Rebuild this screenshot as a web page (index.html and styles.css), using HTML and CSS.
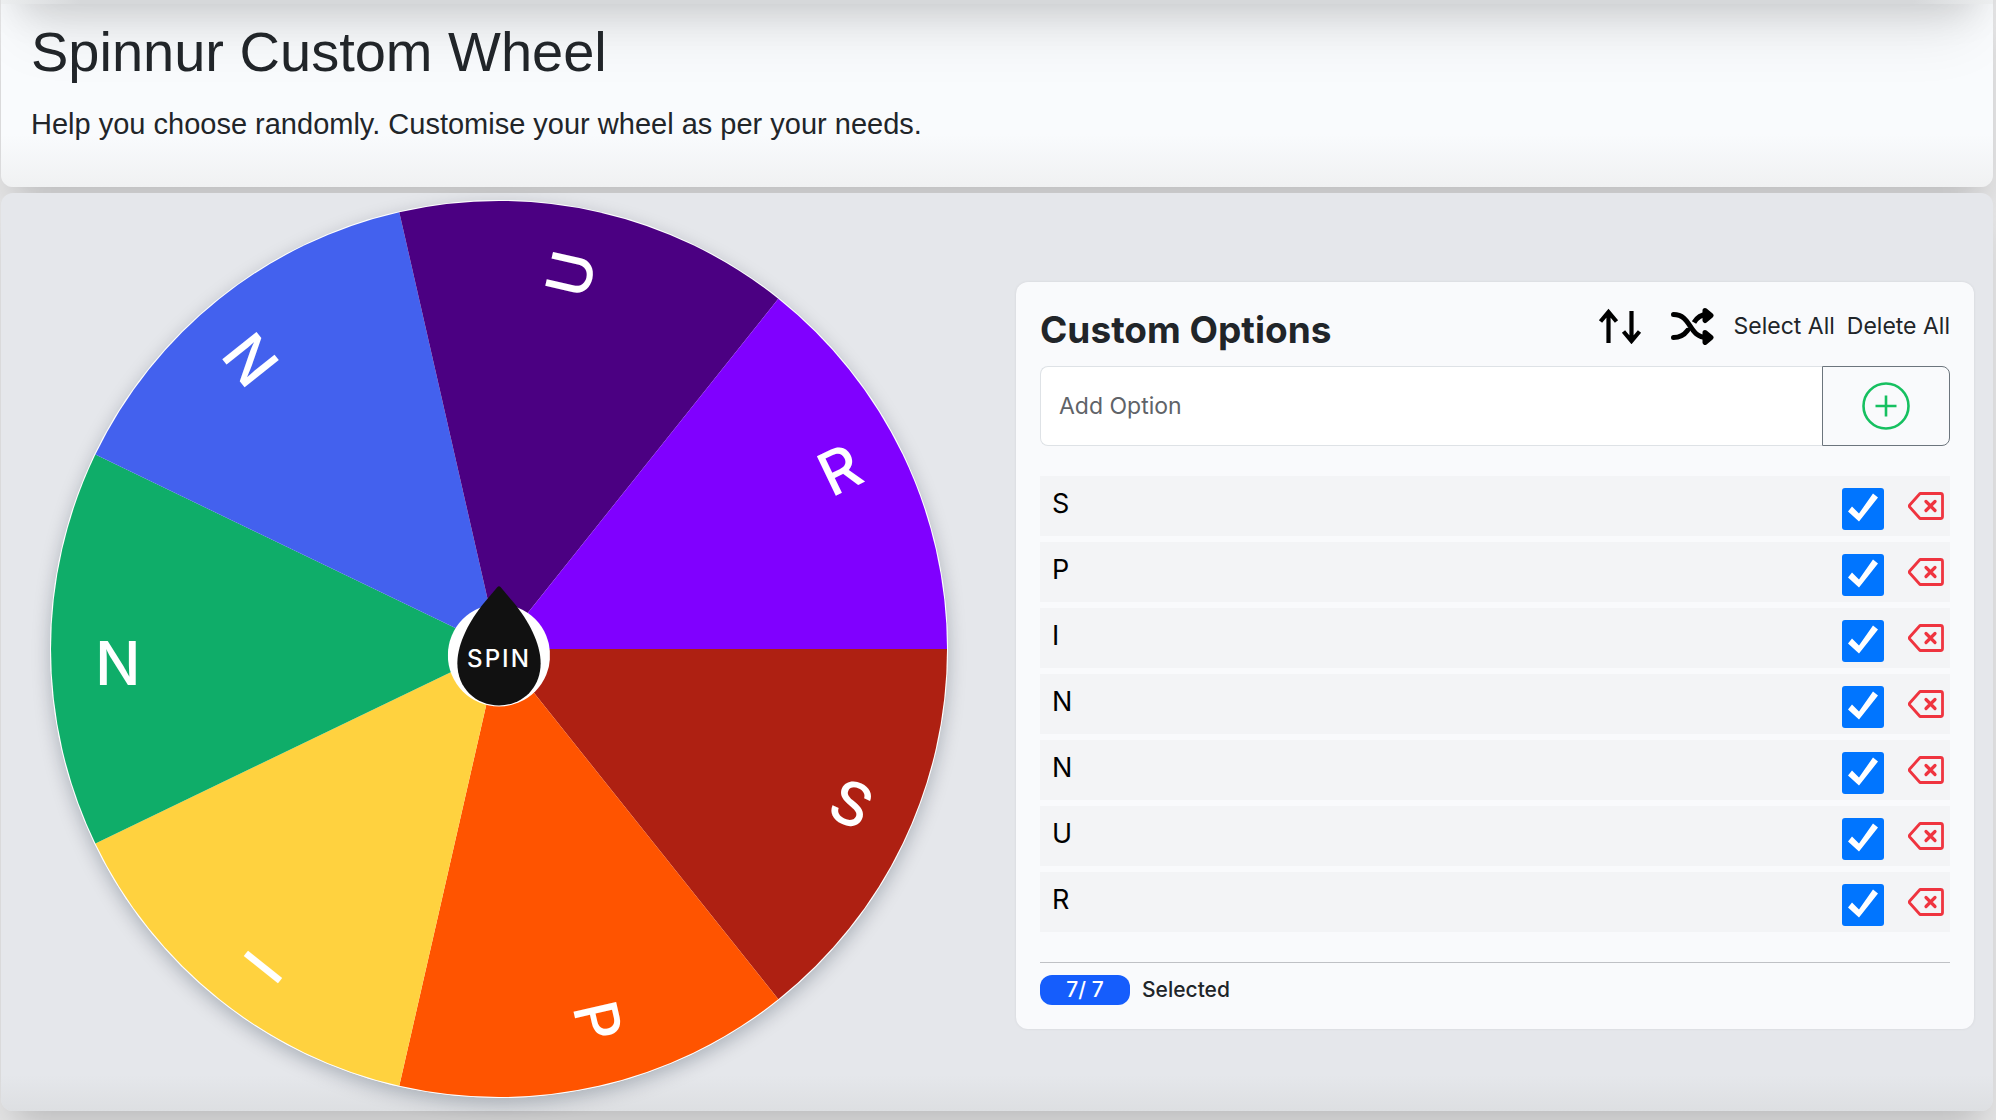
FILE: index.html
```html
<!DOCTYPE html>
<html lang="en">
<head>
<meta charset="utf-8">
<meta name="viewport" content="width=device-width, initial-scale=1">
<title>Spinnur Custom Wheel</title>
<link rel="stylesheet" href="styles.css">
</head>
<body>
<svg class="sprite" aria-hidden="true">
  <symbol id="backspace" viewBox="0 0 36 28">
    <path d="M12 1.5h20.500a2 2 0 0 1 2 2v21a2 2 0 0 1-2 2H12L1.500 14.800a1 1 0 0 1 0-1.500z" fill="none" stroke="currentColor" stroke-width="2.800" stroke-linejoin="round"/>
    <path d="M18 9.500l9 9m0-9l-9 9" fill="none" stroke="currentColor" stroke-width="3.200" stroke-linecap="round"/>
  </symbol>
</svg>
<div class="navbar"></div>
<header class="hero">
  <h1 class="hero-title">Spinnur Custom Wheel</h1>
  <p class="hero-text">Help you choose randomly. Customise your wheel as per your needs.</p>
</header>
<main class="board">
  <section class="wheel-column">
    <div class="wheel">
      <svg class="wheel-face" viewBox="-449 -449 898 898">
        <circle r="449" fill="#fff"/>
        <path fill="#ae2012" d="M0 0L448 0A448 448 0 0 1 279.300 350.300z"/>
        <path fill="#ff5400" d="M0 0L279.300 350.300A448 448 0 0 1-99.700 436.800z"/>
        <path fill="#ffd23f" d="M0 0L-99.700 436.800A448 448 0 0 1-403.600 194.400z"/>
        <path fill="#0fad69" d="M0 0L-403.600 194.400A448 448 0 0 1-403.600-194.400z"/>
        <path fill="#4361ee" d="M0 0L-403.600-194.400A448 448 0 0 1-99.700-436.800z"/>
        <path fill="#4b0082" d="M0 0L-99.700-436.800A448 448 0 0 1 279.300-350.300z"/>
        <path fill="#8000ff" d="M0 0L279.300-350.300A448 448 0 0 1 448 0z"/>
        <g class="wheel-label">
          <text x="404" y="8" transform="rotate(25.714)">S</text>
          <text x="404" y="8" transform="rotate(77.143)">P</text>
          <text x="404" y="8" transform="rotate(128.571)">I</text>
          <text x="404" y="8" transform="rotate(180)">N</text>
          <text x="404" y="8" transform="rotate(231.429)">N</text>
          <text x="404" y="8" transform="rotate(282.857)">U</text>
          <text x="404" y="8" transform="rotate(334.286)">R</text>
        </g>
      </svg>
      <button class="spin" type="button">
        <svg class="spin-face" viewBox="0 0 102 120">
          <circle cx="51" cy="69" r="51" fill="#fff"/>
          <path fill="#111" d="M49.500 1Q51-0.500 52.500 1L66 17C80 34 92.500 57 92.500 77C92.500 102 74 119 51 119S9.500 102 9.500 77C9.500 57 22 34 36 17z"/>
          <text class="spin-text" x="51" y="81">SPIN</text>
        </svg>
      </button>
    </div>
  </section>
  <section class="options-column">
    <div class="card">
      <div class="card-head">
        <h2 class="card-title">Custom Options</h2>
        <div class="tools">
          <button class="tool" type="button" aria-label="Sort">
            <svg width="44" height="36" viewBox="0 0 44 36" fill="none" stroke="#000" stroke-width="4.200"><path d="M10.500 35V5M2.500 13.500l8-9.500 8 9.500M33.500 3v30M25.500 23.500l8 9.500 8-9.500"/></svg>
          </button>
          <button class="tool tool-shuffle" type="button" aria-label="Shuffle">
            <svg width="44" height="38" viewBox="0 0 44 38" fill="none" stroke="#000" stroke-width="5" stroke-linecap="round"><path d="M3.500 7.500C22 7.500 18 30.500 37 30.500M3.500 30.500c7 0 11-3 14-7"/><path stroke-linecap="butt" d="M24 15.500c3-5 7-8 13-8"/><path fill="#000" stroke-width="5" stroke-linejoin="round" d="M35 3.500l6 5-6 5zM35 25.500l6 5-6 5z"/></svg>
          </button>
          <button class="tool" type="button">Select All</button>
          <button class="tool" type="button">Delete All</button>
        </div>
      </div>
      <form class="add">
        <input class="add-input" type="text" placeholder="Add Option" aria-label="Add Option">
        <button class="add-button" type="button" aria-label="Add">
          <svg width="48" height="48" viewBox="0 0 48 48" fill="none" stroke="#16c060" stroke-width="2.600"><circle cx="24" cy="24" r="22.500"/><path d="M24 13.500v21M13.500 24h21"/></svg>
        </button>
      </form>
      <ul class="list">
        <li class="row"><label class="row-name" for="o1">S</label><input class="check" id="o1" type="checkbox" checked><button class="remove" type="button" aria-label="Delete S"><svg width="36" height="28"><use href="#backspace"/></svg></button></li>
        <li class="row"><label class="row-name" for="o2">P</label><input class="check" id="o2" type="checkbox" checked><button class="remove" type="button" aria-label="Delete P"><svg width="36" height="28"><use href="#backspace"/></svg></button></li>
        <li class="row"><label class="row-name" for="o3">I</label><input class="check" id="o3" type="checkbox" checked><button class="remove" type="button" aria-label="Delete I"><svg width="36" height="28"><use href="#backspace"/></svg></button></li>
        <li class="row"><label class="row-name" for="o4">N</label><input class="check" id="o4" type="checkbox" checked><button class="remove" type="button" aria-label="Delete N"><svg width="36" height="28"><use href="#backspace"/></svg></button></li>
        <li class="row"><label class="row-name" for="o5">N</label><input class="check" id="o5" type="checkbox" checked><button class="remove" type="button" aria-label="Delete N"><svg width="36" height="28"><use href="#backspace"/></svg></button></li>
        <li class="row"><label class="row-name" for="o6">U</label><input class="check" id="o6" type="checkbox" checked><button class="remove" type="button" aria-label="Delete U"><svg width="36" height="28"><use href="#backspace"/></svg></button></li>
        <li class="row"><label class="row-name" for="o7">R</label><input class="check" id="o7" type="checkbox" checked><button class="remove" type="button" aria-label="Delete R"><svg width="36" height="28"><use href="#backspace"/></svg></button></li>
      </ul>
      <div class="summary"><span class="badge">7/ 7</span><span>Selected</span></div>
    </div>
  </section>
</main>
</body>
</html>
```
FILE: styles.css
```css
* { box-sizing: border-box; }
body {
  margin: 0;
  min-height: 100vh;
  padding: 0 3px 9px 1px;
  overflow-x: hidden;
  background: #e6e6e7;
  color: #212529;
  font-family: Inter, "Liberation Sans", sans-serif;
  font-size: 23px;
}
button { padding: 0; border: 0; background: none; color: inherit; font: inherit; cursor: pointer; }
svg { display: block; }
.sprite { position: absolute; width: 0; height: 0; }

.navbar {
  position: relative;
  height: 124px;
  margin-top: -120px;
  background: linear-gradient(to right, #eceeef, #d6d8da 80px, #d6d8da calc(100% - 80px), #eceeef);
  box-shadow: 0 50px 60px -20px rgba(0, 0, 0, 0.08), 0 22px 40px -18px rgba(0, 0, 0, 0.16);
  z-index: 1;
}
.hero {
  height: 183px;
  padding: 12px 30px;
  border-radius: 0 0 12px 12px;
  background: linear-gradient(#f9fbfd 130px, #f0f1f2);
  box-shadow: 0 24px 36px -12px rgba(0, 0, 0, 0.2);
}
.hero-title,
.hero-text { position: relative; z-index: 2; font-family: "Liberation Sans", Arial, sans-serif; font-weight: 400; }
.hero-title { margin: 0 0 12px; font-size: 56px; line-height: 72px; }
.hero-text { margin: 0; font-size: 29px; line-height: 48px; }

.board {
  position: relative;
  display: grid;
  grid-template-columns: 1fr 1fr;
  align-items: center;
  margin-top: 6px;
  padding: 7px 0 13px;
  border-radius: 12px;
  background: linear-gradient(to top, #dddfe2, #e5e7eb 36px);
  box-shadow: 0 24px 36px -12px rgba(0, 0, 0, 0.2);
}
.wheel-column { padding: 0 49px; }
.wheel { position: relative; border-radius: 50%; box-shadow: 0 6px 18px rgba(0, 20, 40, 0.25); }
.wheel-face { width: 100%; }
.wheel-label { fill: #fff; font-size: 60px; font-weight: 500; text-anchor: end; }
.spin { position: absolute; left: 50%; top: 43%; width: 11.4%; transform: translateX(-50%); }
.spin-face { width: 100%; }
.spin-text { fill: #fff; font-size: 24px; font-weight: 500; letter-spacing: 2px; text-anchor: middle; }

.options-column { padding: 12px 19px 0; }
.card { padding: 24px; border-radius: 12px; background: #f9fafc; box-shadow: 0 0 3px rgba(0, 0, 0, 0.08); }
.card-head { display: flex; justify-content: space-between; height: 60px; }
.card-title { margin: 0; font-size: 37px; font-weight: 700; line-height: 48px; }
.tools { display: flex; align-items: center; gap: 12px; height: 40px; }
.tool-shuffle { margin: 0 8px 0 16px; }
.add { display: flex; height: 80px; margin: 0 0 30px; }
.add-input {
  flex: 1;
  min-width: 0;
  padding: 0 18px;
  border: 1px solid #dee2e6;
  border-right: 0;
  border-radius: 8px 0 0 8px;
  background: #fff;
  font: inherit;
}
.add-input::placeholder { color: #5f6368; opacity: 1; }
.add-button { display: grid; place-items: center; width: 128px; border: 1px solid #6c757d; border-radius: 0 8px 8px 0; }

.list { display: grid; gap: 6px; margin: 0; padding: 0 0 30px; border-bottom: 1px solid #bfc1c5; list-style: none; }
.row { display: flex; align-items: flex-start; height: 60px; padding: 12px 6px 0 12px; background: #f3f4f6; }
.row-name { flex: 1; color: #000; font-size: 27px; line-height: 32px; }
.check {
  width: 42px;
  height: 42px;
  margin: 0 24px 0 0;
  border-radius: 3px;
  background: #0075ff;
  appearance: none;
}
.check:checked::before {
  content: "";
  display: block;
  height: 42px;
  background: #fff;
  clip-path: polygon(6px 24px, 10px 19px, 17px 26px, 31px 6px, 36px 10px, 17px 34px);
}
.remove { padding-top: 4px; color: #ef343f; }
.summary { display: flex; align-items: center; gap: 12px; padding-top: 12px; font-size: 21px; font-weight: 500; line-height: 30px; }
.badge { width: 90px; border-radius: 12px; background: #155dfc; color: #fff; text-align: center; }
```
